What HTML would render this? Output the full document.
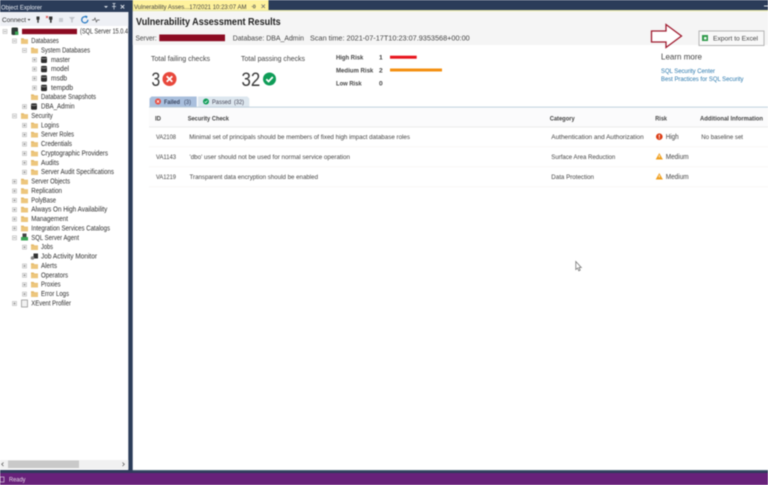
<!DOCTYPE html>
<html><head><meta charset="utf-8"><title>Vulnerability Assessment Results</title>
<style>
html,body{margin:0;padding:0;width:768px;height:485px;overflow:hidden;background:#fff}
svg{display:block;filter:blur(.42px)}
text{font-family:"Liberation Sans",sans-serif;fill:#3a3a3a;font-size:6.8px}
.t text{font-size:6.9px;fill:#2e2e2e}
.b{font-weight:bold}
.h{font-weight:bold;fill:#444;font-size:6.6px}
.c{font-size:6.7px;fill:#444}
.l{fill:#2a78ad;font-size:6.7px}
</style></head><body>
<svg width="768" height="485" viewBox="0 0 768 485" xmlns="http://www.w3.org/2000/svg">
<defs>
<g id="f"><path d="M0 1.200h2.600l.8 1H7v4.600H0z" fill="#e3b868"/><path d="M0 2.600h7v4.200H0z" fill="#edc67c"/></g>
<g id="p"><rect x="-2" y="-2" width="4" height="4" fill="#fafafa" stroke="#b5b5b5" stroke-width=".6"/><path d="M-1.200 0h2.400M0-1.200v2.400" stroke="#666" stroke-width=".5"/></g>
<g id="m"><rect x="-2" y="-2" width="4" height="4" fill="#fafafa" stroke="#b5b5b5" stroke-width=".6"/><path d="M-1.200 0h2.400" stroke="#666" stroke-width=".5"/></g>
<g id="d"><rect x="0" y="0" width="6" height="6.400" rx="1.400" fill="#2e2e2e"/><path d="M.3 1.600c1.500.8 3.900.8 5.400 0" stroke="#ddd" stroke-width=".5" fill="none"/></g>
</defs>

<rect width="768" height="485" fill="#2b3c59"/>
<!-- object explorer -->
<rect x="0" y="12" width="128.300" height="458" fill="#fff"/>
<rect x="0" y="12" width="128.300" height="14" fill="#eef0f5"/>
<text x="1" y="9.500" style="font-size:6.800px;fill:#e8ecf3" textLength="41" lengthAdjust="spacingAndGlyphs">Object Explorer</text>
<path d="M104 6h4l-2 2z" fill="#dfe4ec"/>
<path d="M114 3.500v4M112.500 3.500h3M112 6.500h4M114 7v2.500" stroke="#dfe4ec" stroke-width=".7" fill="none"/>
<path d="M120.700 5l3.600 3.600M124.300 5l-3.600 3.600" stroke="#dfe4ec" stroke-width=".9"/>
<!-- toolbar -->
<text x="2" y="22" style="font-size:6.800px;fill:#333" textLength="24" lengthAdjust="spacingAndGlyphs">Connect</text>
<path d="M27.500 19h3l-1.500 1.600z" fill="#333"/>
<path d="M36.500 16.500h3v3.200h-.8v3h-1.400v-3h-.8z" fill="#333"/>
<path d="M49 16.500h3.400v3.200h-.8v3h-1.600v-3H49z" fill="#333"/><path d="M46 16l2 2M48 16l-2 2" stroke="#d33" stroke-width=".7"/>
<rect x="59" y="18" width="4" height="4" fill="#c9ccd2"/>
<path d="M69 17h6l-2.300 2.700v2.800h-1.400v-2.800z" fill="#c2c6cc"/>
<path d="M86.500 17.200a3.100 3.100 0 1 0 1.400 2.600" stroke="#1f74c0" stroke-width="1.200" fill="none"/><path d="M85 15.500l2.600.8-1 2.200z" fill="#1f74c0"/>
<path d="M92 20h2l1-2 1.400 4 1-2h2.200" stroke="#555" stroke-width=".7" fill="none"/>
<!-- tree -->
<use href="#m" x="5" y="31.500"/>
<rect x="11.500" y="27.500" width="6.500" height="7.500" rx="1.200" fill="#2f3a36"/><rect x="15" y="31.500" width="3.400" height="3.400" fill="#3aa655"/>
<rect x="22" y="28.800" width="55" height="5.400" fill="#8c0b22"/>
<g class="t">
<text x="80" y="33.500" textLength="48" lengthAdjust="spacingAndGlyphs">(SQL Server 15.0.4</text>
<use href="#m" x="14.500" y="41"/><use href="#f" x="21" y="37"/><text x="31.300" y="43" textLength="27.500" lengthAdjust="spacingAndGlyphs">Databases</text>
<use href="#m" x="24.500" y="50.400"/><use href="#f" x="31" y="46.400"/><text x="41" y="52.400" textLength="49" lengthAdjust="spacingAndGlyphs">System Databases</text>
<use href="#p" x="34.500" y="59.800"/><use href="#d" x="41" y="56.600"/><text x="51" y="61.800" textLength="19" lengthAdjust="spacingAndGlyphs">master</text>
<use href="#p" x="34.500" y="69.100"/><use href="#d" x="41" y="65.900"/><text x="51" y="71.100" textLength="18" lengthAdjust="spacingAndGlyphs">model</text>
<use href="#p" x="34.500" y="78.500"/><use href="#d" x="41" y="75.300"/><text x="51" y="80.500" textLength="16" lengthAdjust="spacingAndGlyphs">msdb</text>
<use href="#p" x="34.500" y="87.900"/><use href="#d" x="41" y="84.700"/><text x="51" y="89.900" textLength="22" lengthAdjust="spacingAndGlyphs">tempdb</text>
<use href="#f" x="31" y="93.200"/><text x="41" y="99.200" textLength="55" lengthAdjust="spacingAndGlyphs">Database Snapshots</text>
<use href="#p" x="24.500" y="106.600"/><use href="#d" x="31" y="103.400"/><text x="41" y="108.600" textLength="33.500" lengthAdjust="spacingAndGlyphs">DBA_Admin</text>
<use href="#m" x="14.500" y="116"/><use href="#f" x="21" y="112"/><text x="31.300" y="118" textLength="21.500" lengthAdjust="spacingAndGlyphs">Security</text>
<use href="#p" x="24.500" y="125.400"/><use href="#f" x="31" y="121.400"/><text x="41" y="127.400" textLength="18" lengthAdjust="spacingAndGlyphs">Logins</text>
<use href="#p" x="24.500" y="134.700"/><use href="#f" x="31" y="130.700"/><text x="41" y="136.700" textLength="33" lengthAdjust="spacingAndGlyphs">Server Roles</text>
<use href="#p" x="24.500" y="144.100"/><use href="#f" x="31" y="140.100"/><text x="41" y="146.100" textLength="31" lengthAdjust="spacingAndGlyphs">Credentials</text>
<use href="#p" x="24.500" y="153.500"/><use href="#f" x="31" y="149.500"/><text x="41" y="155.500" textLength="67" lengthAdjust="spacingAndGlyphs">Cryptographic Providers</text>
<use href="#p" x="24.500" y="162.800"/><use href="#f" x="31" y="158.800"/><text x="41" y="164.800" textLength="18" lengthAdjust="spacingAndGlyphs">Audits</text>
<use href="#p" x="24.500" y="172.200"/><use href="#f" x="31" y="168.200"/><text x="41" y="174.200" textLength="73" lengthAdjust="spacingAndGlyphs">Server Audit Specifications</text>
<use href="#p" x="14.500" y="181.600"/><use href="#f" x="21" y="177.600"/><text x="31.300" y="183.600" textLength="38.700" lengthAdjust="spacingAndGlyphs">Server Objects</text>
<use href="#p" x="14.500" y="191"/><use href="#f" x="21" y="187"/><text x="31.300" y="193" textLength="30.700" lengthAdjust="spacingAndGlyphs">Replication</text>
<use href="#p" x="14.500" y="200.300"/><use href="#f" x="21" y="196.300"/><text x="31.300" y="202.300" textLength="24.700" lengthAdjust="spacingAndGlyphs">PolyBase</text>
<use href="#p" x="14.500" y="209.700"/><use href="#f" x="21" y="205.700"/><text x="31.300" y="211.700" textLength="76" lengthAdjust="spacingAndGlyphs">Always On High Availability</text>
<use href="#p" x="14.500" y="219.100"/><use href="#f" x="21" y="215.100"/><text x="31.300" y="221.100" textLength="36.700" lengthAdjust="spacingAndGlyphs">Management</text>
<use href="#p" x="14.500" y="228.400"/><use href="#f" x="21" y="224.400"/><text x="31.300" y="230.400" textLength="78.700" lengthAdjust="spacingAndGlyphs">Integration Services Catalogs</text>
<use href="#m" x="14.500" y="237.800"/><rect x="22.500" y="233.500" width="4" height="5" fill="#444"/><rect x="21" y="237" width="7" height="3.500" fill="#3aa655"/><text x="31.300" y="239.800" textLength="47.700" lengthAdjust="spacingAndGlyphs">SQL Server Agent</text>
<use href="#p" x="24.500" y="247.200"/><use href="#f" x="31" y="243.200"/><text x="41" y="249.200" textLength="12" lengthAdjust="spacingAndGlyphs">Jobs</text>
<rect x="33.500" y="253.500" width="4.500" height="5" fill="#333"/><circle cx="32.500" cy="258" r="1.800" fill="#888"/><text x="41" y="258.600" textLength="56" lengthAdjust="spacingAndGlyphs">Job Activity Monitor</text>
<use href="#p" x="24.500" y="266"/><use href="#f" x="31" y="262"/><text x="41" y="268" textLength="16" lengthAdjust="spacingAndGlyphs">Alerts</text>
<use href="#p" x="24.500" y="275.300"/><use href="#f" x="31" y="271.300"/><text x="41" y="277.300" textLength="27" lengthAdjust="spacingAndGlyphs">Operators</text>
<use href="#p" x="24.500" y="284.700"/><use href="#f" x="31" y="280.700"/><text x="41" y="286.700" textLength="19.500" lengthAdjust="spacingAndGlyphs">Proxies</text>
<use href="#p" x="24.500" y="294.100"/><use href="#f" x="31" y="290.100"/><text x="41" y="296.100" textLength="28" lengthAdjust="spacingAndGlyphs">Error Logs</text>
<use href="#p" x="14.500" y="303.500"/><rect x="21.500" y="300" width="6" height="7" fill="#f2f2f2" stroke="#777" stroke-width=".6"/><text x="31.300" y="305.500" textLength="39.700" lengthAdjust="spacingAndGlyphs">XEvent Profiler</text>
</g>
<!-- scrollbar -->
<rect x="0" y="460" width="128.300" height="9" fill="#f1f1f1"/>
<rect x="8" y="460.500" width="71" height="7.500" fill="#c9c9c9"/>
<path d="M3.500 462.500l-1.800 1.800 1.800 1.800M122.500 462.500l1.800 1.800-1.800 1.800" stroke="#666" stroke-width=".8" fill="none"/>

<!-- document -->
<rect x="132.700" y="11" width="635.300" height="459" fill="#fff"/>
<rect x="132.700" y="12" width="635.300" height="33" fill="#f5f5f5"/>
<rect x="132.700" y="0" width="135.800" height="11" fill="#fff29d"/>
<rect x="132.700" y="10" width="635.300" height="1.400" fill="#e8e8b0"/>
<text x="134" y="9" style="font-size:6.500px;fill:#444" textLength="112.500" lengthAdjust="spacingAndGlyphs">Vulnerability Asses...17/2021 10:23:07 AM</text>
<path d="M251.500 6.500h2M253.500 5v3h1.500V5zM255 6.500h1" stroke="#555" stroke-width=".6" fill="none"/>
<path d="M261.500 4.500l3.500 3.500M265 4.500l-3.500 3.500" stroke="#666" stroke-width=".7"/>
<path d="M764 6h4" stroke="#dfe4ec" stroke-width="1"/>

<text x="136" y="25.200" class="b" style="font-size:10px;fill:#222" textLength="144.700" lengthAdjust="spacingAndGlyphs">Vulnerability Assessment Results</text>
<text x="135.500" y="40.500" style="font-size:7.200px;fill:#444" textLength="21.200" lengthAdjust="spacingAndGlyphs">Server:</text>
<rect x="159.300" y="34.500" width="65.700" height="6.700" fill="#8c0b22"/>
<text x="232.700" y="40.500" style="font-size:7.200px;fill:#444" textLength="71.300" lengthAdjust="spacingAndGlyphs">Database: DBA_Admin</text>
<text x="310" y="40.500" style="font-size:7.200px;fill:#444" textLength="159.700" lengthAdjust="spacingAndGlyphs">Scan time: 2021-07-17T10:23:07.9353568+00:00</text>

<!-- arrow and button -->
<path d="M651.500 31H666V24.500L681.500 36 666 47.500V42H651.500z" fill="#fff" stroke="#a01c30" stroke-width="1.300"/>
<rect x="699" y="31" width="65" height="14.500" fill="#f8f8f8" stroke="#b5b5b5"/>
<rect x="702" y="35" width="6" height="6" fill="#2f9a4a"/><rect x="704" y="37" width="2.500" height="2.500" fill="#e9f5ec"/>
<text x="713" y="40.500" style="font-size:6.800px;fill:#444" textLength="45" lengthAdjust="spacingAndGlyphs">Export to Excel</text>

<!-- summary -->
<text x="151" y="61" style="font-size:7.400px;fill:#444" textLength="59" lengthAdjust="spacingAndGlyphs">Total failing checks</text>
<text x="241" y="61" style="font-size:7.400px;fill:#444" textLength="64" lengthAdjust="spacingAndGlyphs">Total passing checks</text>
<text x="151.500" y="86" style="font-size:19.500px;fill:#3a3a3a" textLength="8.700" lengthAdjust="spacingAndGlyphs">3</text>
<circle cx="169.500" cy="79" r="7" fill="#e8483c"/><path d="M166.700 76.200l5.600 5.600M172.300 76.200l-5.600 5.600" stroke="#fff" stroke-width="1.800"/>
<text x="241.500" y="86" style="font-size:19.500px;fill:#3a3a3a" textLength="18.700" lengthAdjust="spacingAndGlyphs">32</text>
<circle cx="269.500" cy="79" r="6.500" fill="#0f9d58"/><path d="M266.300 79.200l2.300 2.300 4.200-4.500" stroke="#fff" stroke-width="1.800" fill="none"/>

<text x="336" y="59.700" class="h" textLength="27.300" lengthAdjust="spacingAndGlyphs">High Risk</text><text x="379" y="59.700" class="h">1</text><rect x="390" y="55.700" width="26.700" height="3" fill="#e8141c"/>
<text x="336" y="72.300" class="h" textLength="37.300" lengthAdjust="spacingAndGlyphs">Medium Risk</text><text x="379" y="72.300" class="h">2</text><rect x="390" y="68.500" width="52" height="3" fill="#f39012"/>
<text x="336" y="85.500" class="h" textLength="25.700" lengthAdjust="spacingAndGlyphs">Low Risk</text><text x="379" y="85.500" class="h">0</text>

<text x="661" y="59.500" style="font-size:8.600px;fill:#444" textLength="41" lengthAdjust="spacingAndGlyphs">Learn more</text>
<text x="661" y="73" class="l" textLength="54" lengthAdjust="spacingAndGlyphs">SQL Security Center</text>
<text x="661" y="81" class="l" textLength="82.500" lengthAdjust="spacingAndGlyphs">Best Practices for SQL Security</text>

<!-- tabs -->
<path d="M149.500 107v-8.500l2-2h45.200v10.500z" fill="#a9bfdd"/>
<path d="M198 107v-10.500h49.300l2 2v8.500z" fill="#dde7ef"/>
<rect x="149" y="106.700" width="619" height="1" fill="#b9ccd8"/>
<circle cx="158" cy="101.500" r="3" fill="#e8483c"/><path d="M156.800 100.300l2.400 2.400M159.200 100.300l-2.400 2.400" stroke="#fff" stroke-width=".7"/>
<text x="164" y="104" class="b" style="font-size:6.600px;fill:#3a4660" textLength="16" lengthAdjust="spacingAndGlyphs">Failed</text><text x="184" y="104" style="font-size:6.600px;fill:#3a4660" textLength="7" lengthAdjust="spacingAndGlyphs">(3)</text>
<circle cx="206" cy="101.500" r="3" fill="#0f9d58"/><path d="M204.600 101.600l1 1 1.800-2" stroke="#fff" stroke-width=".7" fill="none"/>
<text x="212" y="104" style="font-size:6.600px;fill:#445" textLength="19" lengthAdjust="spacingAndGlyphs">Passed</text><text x="234" y="104" style="font-size:6.600px;fill:#445" textLength="10" lengthAdjust="spacingAndGlyphs">(32)</text>

<!-- table -->
<rect x="149" y="107.700" width="619" height="19" fill="#fbfbfc"/>
<rect x="149" y="126.500" width="619" height=".8" fill="#e6e6e6"/>
<rect x="149" y="146.500" width="619" height=".6" fill="#f4f2ee"/>
<rect x="149" y="166.500" width="619" height=".6" fill="#f4f2ee"/>
<rect x="149" y="186.500" width="619" height=".6" fill="#f4f2ee"/>
<text x="155" y="120.500" class="h" textLength="6" lengthAdjust="spacingAndGlyphs">ID</text>
<text x="187.700" y="120.500" class="h" textLength="41.300" lengthAdjust="spacingAndGlyphs">Security Check</text>
<text x="549.700" y="120.500" class="h" textLength="25" lengthAdjust="spacingAndGlyphs">Category</text>
<text x="655.300" y="120.500" class="h" textLength="11.700" lengthAdjust="spacingAndGlyphs">Risk</text>
<text x="700" y="120.500" class="h" textLength="63" lengthAdjust="spacingAndGlyphs">Additional Information</text>

<text x="156" y="139" class="c" textLength="20" lengthAdjust="spacingAndGlyphs">VA2108</text>
<text x="189.300" y="139" class="c" textLength="220.700" lengthAdjust="spacingAndGlyphs">Minimal set of principals should be members of fixed high impact database roles</text>
<text x="551.300" y="139" class="c" textLength="92.400" lengthAdjust="spacingAndGlyphs">Authentication and Authorization</text>
<circle cx="659.300" cy="136.700" r="3.300" fill="#dc3c14"/><rect x="658.800" y="134.700" width="1" height="2.500" fill="#fff"/><rect x="658.800" y="137.700" width="1" height="1" fill="#fff"/>
<text x="665.700" y="139" class="c" style="font-size:7px" textLength="13" lengthAdjust="spacingAndGlyphs">High</text>
<text x="701.300" y="139" class="c" textLength="41.700" lengthAdjust="spacingAndGlyphs">No baseline set</text>

<text x="156" y="159" class="c" textLength="20" lengthAdjust="spacingAndGlyphs">VA1143</text>
<text x="189.500" y="159" class="c" textLength="160.500" lengthAdjust="spacingAndGlyphs">'dbo' user should not be used for normal service operation</text>
<text x="551.300" y="159" class="c" textLength="64" lengthAdjust="spacingAndGlyphs">Surface Area Reduction</text>
<path d="M659.300 153l3.600 6.500h-7.200z" fill="#f0a020"/><rect x="658.900" y="155.200" width=".8" height="2.200" fill="#fff"/>
<text x="665.700" y="159" class="c" style="font-size:7px" textLength="23" lengthAdjust="spacingAndGlyphs">Medium</text>

<text x="156" y="179" class="c" textLength="20" lengthAdjust="spacingAndGlyphs">VA1219</text>
<text x="189.500" y="179" class="c" textLength="128.500" lengthAdjust="spacingAndGlyphs">Transparent data encryption should be enabled</text>
<text x="551.300" y="179" class="c" textLength="42.700" lengthAdjust="spacingAndGlyphs">Data Protection</text>
<path d="M659.300 173l3.600 6.500h-7.200z" fill="#f0a020"/><rect x="658.900" y="175.200" width=".8" height="2.200" fill="#fff"/>
<text x="665.700" y="179" class="c" style="font-size:7px" textLength="23" lengthAdjust="spacingAndGlyphs">Medium</text>

<!-- cursor -->
<path d="M575.800 261.500v8l1.800-1.500 1.200 2.800 1.400-.6-1.200-2.700h2.300z" fill="#fff" stroke="#777" stroke-width=".8"/>

<!-- bottom -->
<rect x="0" y="470" width="768" height="3" fill="#2f3a5c"/>
<rect x="132.700" y="470" width="635.300" height="1" fill="#4d6478"/>
<rect x="0" y="473" width="768" height="12" fill="#68217a"/>
<rect x="0" y="477" width="4" height="5" fill="none" stroke="#d8c6de" stroke-width=".7"/>
<text x="9" y="481.700" style="font-size:6.800px;fill:#e4d6e8" textLength="16.500" lengthAdjust="spacingAndGlyphs">Ready</text>
</svg>
</body></html>
